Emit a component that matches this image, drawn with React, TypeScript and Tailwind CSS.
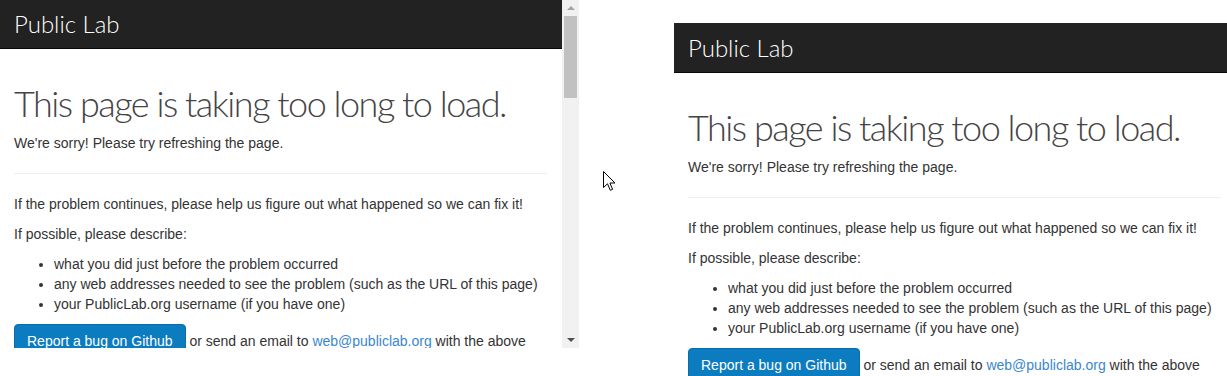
import React from "react";

const body = { fontFamily: '"Liberation Sans", Arial, sans-serif' };
const display = { fontFamily: 'Lato, "Open Sans", sans-serif' };

function ErrorPage() {
  return (
    <div className="w-[562px] bg-white">
      <div className="h-[50px] bg-[#222] border-b border-[#080808] pl-[14px]">
        <span className="text-[24px] leading-[49px] font-light text-white" style={display}>
          Public Lab
        </span>
      </div>

      <div className="pl-[14px] pr-[15px] text-[14px] leading-[20px] text-[#333]" style={body}>
        <h1
          className="mt-[34px] mb-[10px] text-[36px] leading-[40px] tracking-[-1.5px] font-light text-[#444] whitespace-nowrap"
          style={display}
        >
          This page is taking too long to load.
        </h1>
        <p>We're sorry! Please try refreshing the page.</p>
        <hr className="mt-[20px] mb-[20px] border-t border-[#eee]" />
        <p className="mb-[10px]">
          If the problem continues, please help us figure out what happened so we can fix it!
        </p>
        <p className="mb-[10px]">If possible, please describe:</p>
        <ul className="list-disc pl-10 mb-[10px]">
          <li>what you did just before the problem occurred</li>
          <li>any web addresses needed to see the problem (such as the URL of this page)</li>
          <li>your PublicLab.org username (if you have one)</li>
        </ul>
        <p className="whitespace-nowrap">
          <a className="inline-block px-[12px] py-[6px] rounded-[4px] bg-[#0c7cc1] border border-[#0a6cab] text-white">
            Report a bug on Github
          </a>{" "}
          or send an email to <a className="text-[#3a87cf]">web@publiclab.org</a> with the above
        </p>
      </div>
    </div>
  );
}

function Scrollbar() {
  return (
    <div className="w-[17px] h-full bg-[#f1f1f1] flex flex-col items-center">
      <div className="h-[16px] flex items-center justify-center">
        <div className="w-0 h-0 border-l-[4px] border-r-[4px] border-b-[4px] border-l-transparent border-r-transparent border-b-[#a3a3a3]" />
      </div>
      <div className="w-[13px] h-[82px] bg-[#c1c1c1]" />
      <div className="flex-1" />
      <div className="h-[16px] flex items-center justify-center">
        <div className="w-0 h-0 border-l-[4px] border-r-[4px] border-t-[4px] border-l-transparent border-r-transparent border-t-[#505050]" />
      </div>
    </div>
  );
}

export default function App() {
  return (
    <div className="relative w-[1227px] h-[376px] bg-white overflow-hidden flex items-start">
      <div className="flex h-[348px] overflow-hidden">
        <div className="-mt-px">
          <ErrorPage />
        </div>
        <Scrollbar />
      </div>

      <div className="ml-[95px] mt-[23px] w-[553px] h-[353px] overflow-hidden">
        <ErrorPage />
      </div>

      <svg className="absolute left-[603px] top-[171px]" width="13" height="21" viewBox="0 0 13 21">
        <path
          d="M0.5 0.5 L0.5 16.5 L4.5 12.8 L7.3 19.3 L9.6 18.3 L6.9 12 L12 12 Z"
          fill="#fff"
          stroke="#000"
          strokeWidth="1"
          strokeLinejoin="round"
        />
      </svg>
    </div>
  );
}
